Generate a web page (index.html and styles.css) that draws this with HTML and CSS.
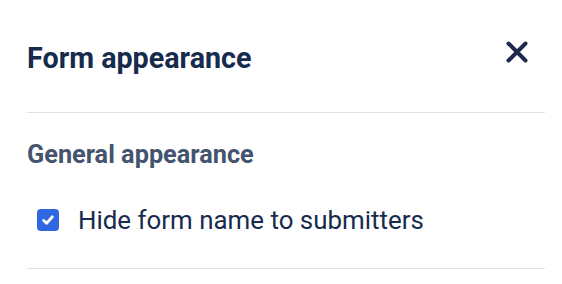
FILE: index.html
```html
<!DOCTYPE html>
<html lang="en">
<head>
    <meta charset="UTF-8">
    <meta name="viewport" content="width=device-width, initial-scale=1.0">
    <title>Form appearance</title>
    <link rel="stylesheet" href="styles.css">
</head>
<body>
    <div class="panel">
        <div class="panel-header">
            <h2 class="panel-title">Form appearance</h2>
            <button class="close-button" aria-label="Close">
                <svg width="24" height="24" viewBox="0 0 24 24">
                    <path d="M3.5 3.5 L20.5 20.5 M20.5 3.5 L3.5 20.5" stroke="#1d2a4c" stroke-width="4" stroke-linecap="round" fill="none"/>
                </svg>
            </button>
        </div>

        <div class="section">
            <h3 class="section-title">General appearance</h3>
            <label class="checkbox-row">
                <span class="checkbox">
                    <svg width="16" height="16" viewBox="0 0 16 16">
                        <path d="M3.6 8.4 L6.6 11.2 L12.4 4.8" stroke="#fff" stroke-width="2.8" stroke-linecap="round" stroke-linejoin="round" fill="none"/>
                    </svg>
                </span>
                <span class="checkbox-label">Hide form name to submitters</span>
            </label>
        </div>
    </div>
</body>
</html>
```

FILE: styles.css
```css
body {
    margin: 0;
    font-family: Roboto, "Liberation Sans", sans-serif;
    background-color: #fff;
    color: #172b4d;
}

.panel {
    padding: 0 17px 0 27px;
}

.panel-header {
    display: flex;
    justify-content: space-between;
    align-items: center;
    height: 113px;
    box-sizing: border-box;
    border-bottom: 1px solid #dfe1e6;
}

.panel-title {
    margin: 3px 0 0;
    font-size: 28.7px;
    line-height: 34px;
    font-weight: 700;
    color: #172b4d;
}

.close-button {
    border: none;
    background: none;
    padding: 0;
    margin: 0 16px 8px 0;
    display: flex;
    cursor: pointer;
}

.section {
    padding: 27px 0 32px;
    border-bottom: 1px solid #dfe1e6;
}

.section-title {
    margin: 0 0 34px;
    font-size: 25.3px;
    line-height: 30px;
    font-weight: 700;
    color: #44546f;
}

.checkbox-row {
    display: flex;
    align-items: center;
    gap: 19px;
    padding-left: 10px;
}

.checkbox {
    width: 22px;
    height: 22px;
    border-radius: 4px;
    background-color: #2f67e0;
    display: flex;
    align-items: center;
    justify-content: center;
}

.checkbox-label {
    font-size: 25.9px;
    line-height: 32px;
    color: #172b4d;
}
```
